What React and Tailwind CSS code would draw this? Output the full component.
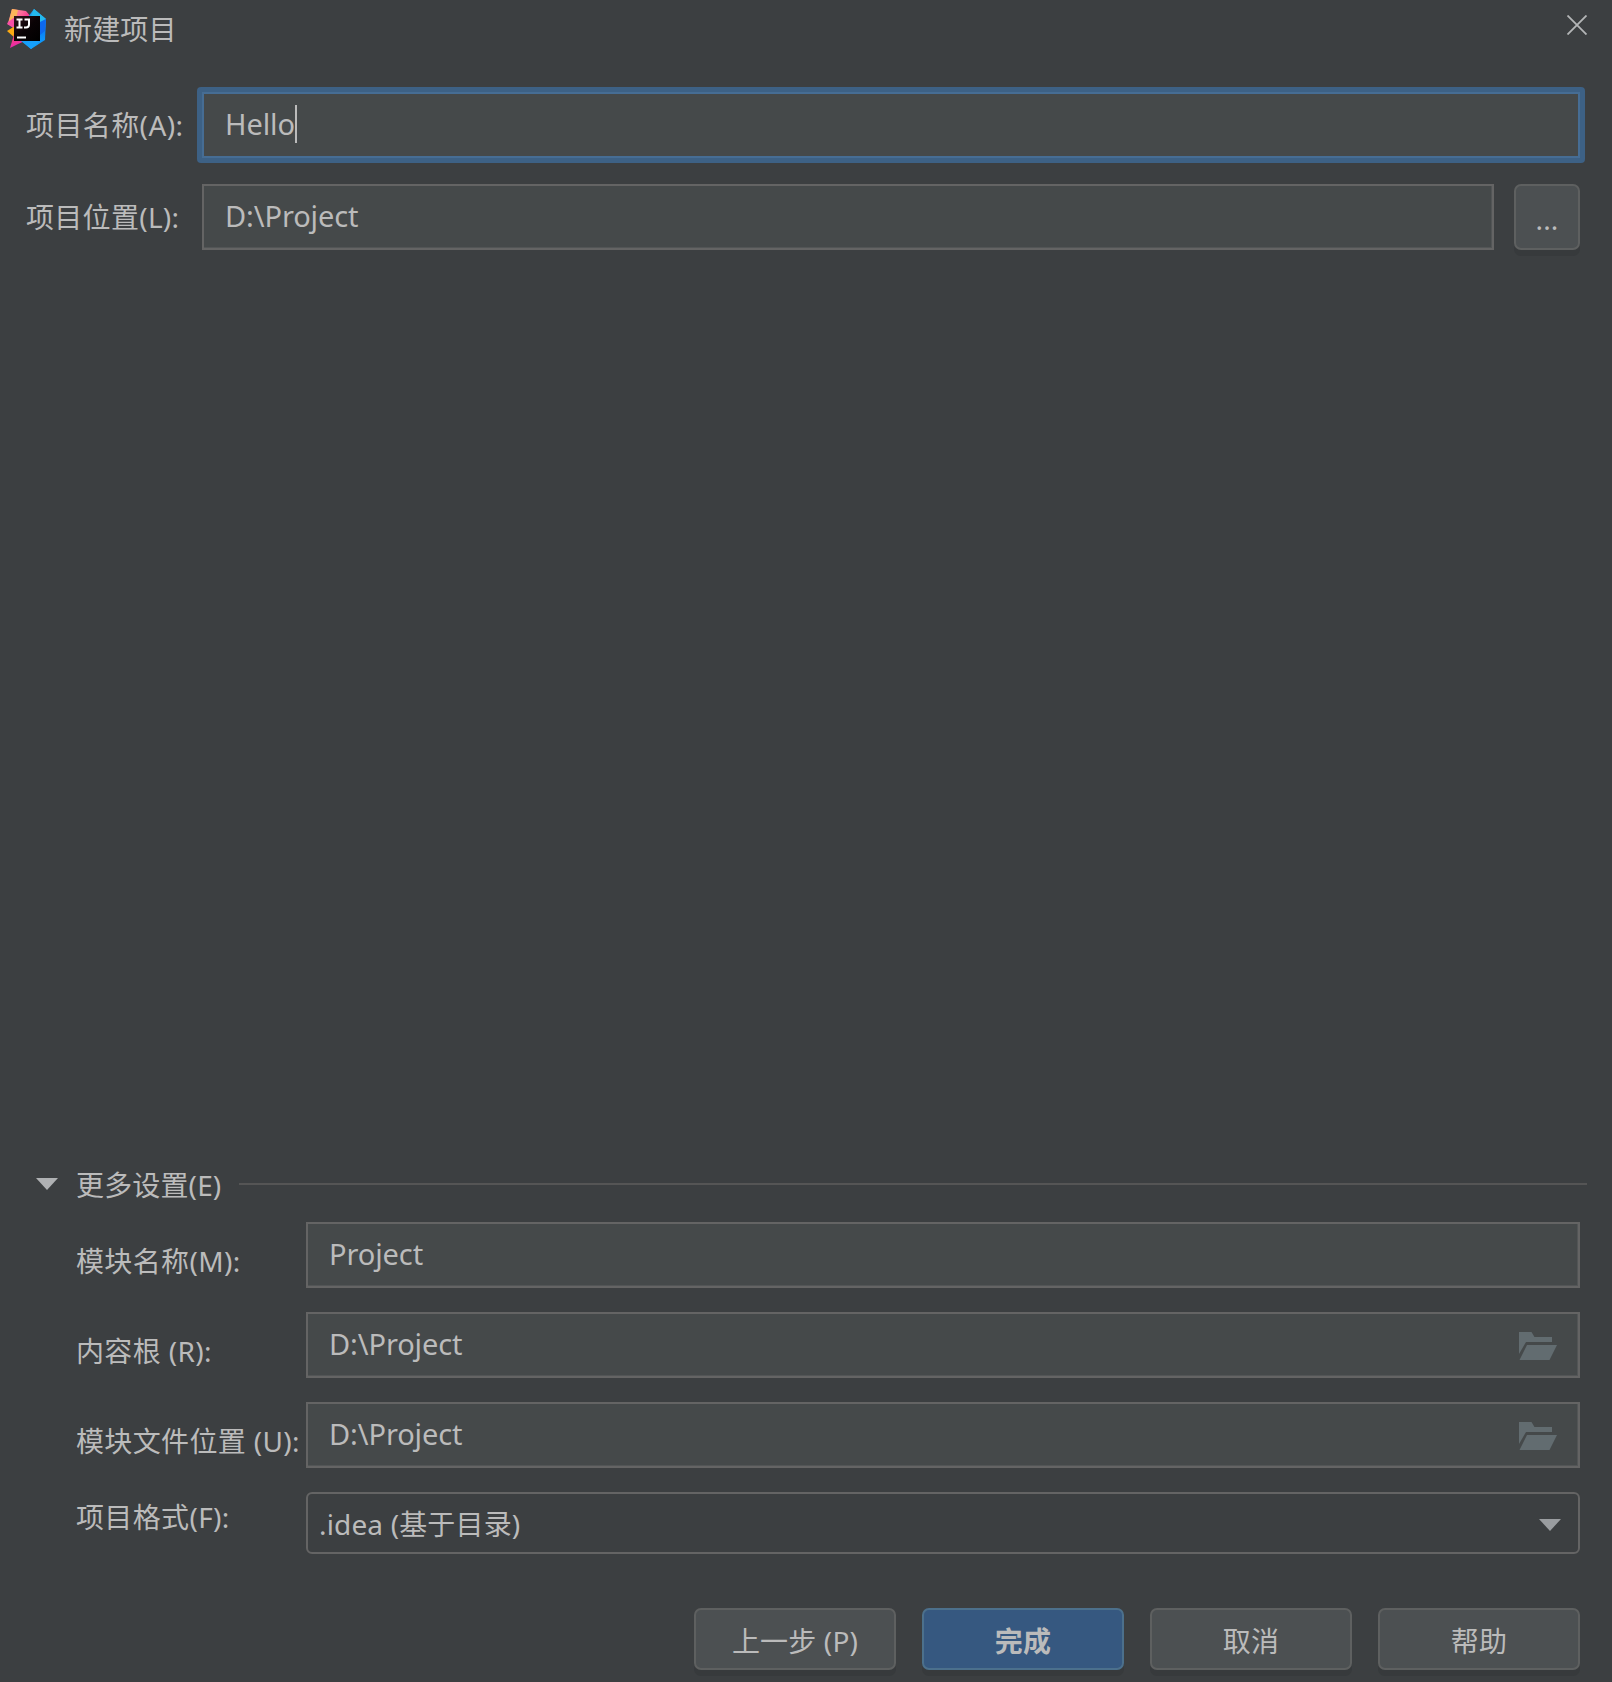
import React from 'react'
import clsx from 'clsx'

const MODULE_FIELDS = [
  { label: '模块名称(M):', value: 'Project', browse: false },
  { label: '内容根 (R):', value: 'D:\\Project', browse: true },
  { label: '模块文件位置 (U):', value: 'D:\\Project', browse: true },
]

function Logo() {
  return (
    <svg width="40" height="42" viewBox="0 0 40 42" className="shrink-0">
      <defs>
        <linearGradient id="pink" x1="0" y1="0" x2="1" y2="0.6">
          <stop offset="0" stopColor="#fb8f7a" />
          <stop offset="0.5" stopColor="#fb6f9b" />
          <stop offset="1" stopColor="#f5188a" />
        </linearGradient>
        <linearGradient id="magenta" x1="0" y1="0" x2="0.3" y2="1">
          <stop offset="0" stopColor="#fd5a4a" />
          <stop offset="1" stopColor="#e824b5" />
        </linearGradient>
        <linearGradient id="cool" x1="0" y1="0" x2="0" y2="1">
          <stop offset="0" stopColor="#1fa5f0" />
          <stop offset="0.6" stopColor="#0a83f7" />
          <stop offset="1" stopColor="#12a9fb" />
        </linearGradient>
        <linearGradient id="tile" x1="0" y1="0" x2="1" y2="1">
          <stop offset="0" stopColor="#30141c" />
          <stop offset="0.5" stopColor="#0a0305" />
          <stop offset="1" stopColor="#000" />
        </linearGradient>
      </defs>
      <path d="M5 1l14 2 5 6-2 10H6L1 15z" fill="url(#pink)" />
      <path d="M5 1l6 1-2 9-8 6z" fill="#fcb65a" />
      <path d="M1 14l7-5v12l-8-5z" fill="#f94fa6" />
      <path d="M0 23l8-5v12z" fill="#fdab12" />
      <path d="M8 22v8l10 3-7 3-8 4 3-10z" fill="url(#magenta)" />
      <path d="M21 9l6-8 12 10-1 21-14 9-9-8z" fill="url(#cool)" />
      <path d="M27 1l12 10-6 4-9-7z" fill="#24b9ee" />
      <path d="M14 33h19l-9 8z" fill="#16a0fb" />
      <path d="M33 14l6-3-1 12-5 4z" fill="#0d68ef" />
      <path d="M7 8h26v25H7z" fill="url(#tile)" />
      <path d="M9.500 11.500h6M12.500 11.500v8M9.500 19.500h6M17.500 11.500H22v5q0 3-3 3h-2" fill="none" stroke="#fff" strokeWidth="2" />
      <path d="M10 28.500h9v2h-9z" fill="#fff" />
    </svg>
  )
}

function FolderIcon() {
  return (
    <svg width="38" height="28" viewBox="0 0 38 28" className="mt-0.5" fill="#626c70">
      <path d="M0 0h12.500l3 5H33v5H7L0 22z" />
      <path d="M8 13h30l-7.500 15H.5z" />
    </svg>
  )
}

function Arrow({ className }) {
  return (
    <svg width="22" height="12" viewBox="0 0 22 12" className={className} fill="currentColor">
      <path d="M0 0h22L11 12z" />
    </svg>
  )
}

function Field({ value, browse }) {
  return (
    <div className="flex h-[66px] flex-1 items-center justify-between border-2 border-[#646464] bg-[#45494a] pl-[21px] pr-[21px] text-[29px] leading-10 tracking-[-0.1px] shadow-[inset_-1px_-1px_0_#525556]">
      <span className="-mt-0.5">{value}</span>
      {browse && <FolderIcon />}
    </div>
  )
}

function Button({ children, primary }) {
  return (
    <button
      className={clsx(
        'flex h-[62px] w-[202px] items-center justify-center rounded-[7px] border-2 pt-1 shadow-[0_6px_0_#373a3c]',
        primary
          ? 'border-[#4c708c] bg-[#365880] font-bold'
          : 'border-[#5e6060] bg-[#4c5052]',
      )}
    >
      {children}
    </button>
  )
}

export default function App() {
  return (
    <div className="flex h-[1682px] w-[1612px] flex-col overflow-hidden bg-[#3c3f41] font-['Noto_Sans','Noto_Sans_CJK_SC',sans-serif] text-[28px] leading-10 tracking-[0.15px] text-[#bbbbbb]">
      <header className="flex h-[87px] items-start justify-between pl-[7px] pr-[25px]">
        <div className="flex items-start gap-[17px] pt-2">
          <Logo />
          <span className="mt-px">新建项目</span>
        </div>
        <svg width="20" height="20" viewBox="0 0 20 20" className="mt-[15px]" fill="none" stroke="#b4b6b7" strokeWidth="1.800">
          <path d="M.5.5l19 19M19.500.5l-19 19" />
        </svg>
      </header>

      <div className="flex pl-[26px] pr-[27px]">
        <div className="w-[171px] whitespace-nowrap pt-[18px] tracking-[0.4px]">项目名称(A):</div>
        <div className="flex h-[76px] flex-1 rounded-[4px] bg-[#3d6185] p-[5px]">
          <div className="flex flex-1 items-center border-2 border-[#466d94] bg-[#45494a] pl-[21px] text-[29px] tracking-[-0.1px]">
            <span className="-mt-0.5">Hello</span>
            <span className="-mt-0.5 h-[38px] w-0.5 bg-[#bbbbbb]" />
          </div>
        </div>
      </div>

      <div className="mt-[21px] flex pl-[26px] pr-8">
        <div className="w-[176px] whitespace-nowrap pt-[13px] tracking-[0.3px]">项目位置(L):</div>
        <Field value="D:\Project" />
        <button className="ml-5 flex h-[66px] w-[66px] items-center justify-center rounded-[7px] border-2 border-[#5e6060] bg-[#4c5052] pt-1 shadow-[0_6px_0_#373a3c]">
          ...
        </button>
      </div>

      <div className="mt-auto flex h-[58px] items-start pl-9 pr-[25px]">
        <Arrow className="mt-[14px] text-[#afb1b3]" />
        <span className="ml-[18px] mt-px w-[163px] whitespace-nowrap">更多设置(E)</span>
        <span className="mt-[19px] h-0.5 flex-1 bg-[#555555]" />
      </div>

      <div className="flex flex-col gap-6 pl-[76px] pr-8">
        {MODULE_FIELDS.map((field) => (
          <div key={field.label} className="flex">
            <div className="w-[230px] whitespace-nowrap pt-[19px] tracking-[0.35px]">{field.label}</div>
            <Field value={field.value} browse={field.browse} />
          </div>
        ))}
        <div className="flex">
          <div className="w-[230px] whitespace-nowrap pt-[5px] tracking-[0.35px]">项目格式(F):</div>
          <div className="flex h-[62px] flex-1 items-center justify-between rounded-[6px] border-2 border-[#646464] pl-[11px] pr-[17px]">
            <span className="mt-0.5">.idea (基于目录)</span>
            <Arrow className="mt-[3px] text-[#9a9da0]" />
          </div>
        </div>
      </div>

      <footer className="mt-[54px] flex h-[74px] shrink-0 items-start justify-end gap-[26px] pr-8">
        <Button>上一步 (P)</Button>
        <Button primary>完成</Button>
        <Button>取消</Button>
        <Button>帮助</Button>
      </footer>
    </div>
  )
}
